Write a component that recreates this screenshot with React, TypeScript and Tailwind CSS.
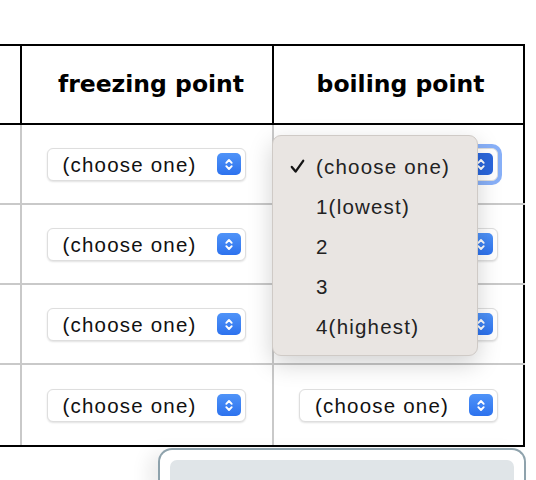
import React from "react";

const rows = [0, 1, 2, 3];
const options = ["(choose one)", "1(lowest)", "2", "3", "4(highest)"];

function Arrows({ pressed }: { pressed?: boolean }) {
    return (
        <div
            className={`flex h-[22px] w-[24px] items-center justify-center rounded-[5px] ${
                pressed ? "bg-[#2a66dc]" : "bg-gradient-to-b from-[#4f93f8] to-[#2d72ee]"
            }`}
        >
            <svg width="24" height="22" viewBox="0 0 24 22" fill="none">
                <path d="M9.3 9.8 L12 7 L14.7 9.8" stroke="#fff" strokeWidth="1.9" strokeLinecap="round" strokeLinejoin="round" />
                <path d="M9.3 13.2 L12 16 L14.7 13.2" stroke="#fff" strokeWidth="1.9" strokeLinecap="round" strokeLinejoin="round" />
            </svg>
        </div>
    );
}

function Select({ focused }: { focused?: boolean }) {
    return (
        <div
            className={`flex h-[33px] w-[199px] items-center justify-between rounded-[6px] border border-[#dedede] bg-white pl-[15px] pr-[4px] ${
                focused
                    ? "shadow-[0_0_0_4px_rgba(96,150,245,0.75)]"
                    : "shadow-[0_1px_2px_rgba(0,0,0,0.12)]"
            }`}
        >
            <span className="pt-[3px] text-[20.5px] leading-none tracking-[1.2px] text-[#111]">(choose one)</span>
            <Arrows pressed={focused} />
        </div>
    );
}

export default function App() {
    return (
        <div className="relative h-[480px] w-[536px] overflow-hidden bg-white font-['Liberation_Sans',Arial,sans-serif]">
            <div className="mt-[44px] w-[525px] border-y-2 border-black">
                {/* header */}
                <div className="flex h-[79px] border-b-2 border-black">
                    <div className="w-[22px] border-r-2 border-black" />
                    <div className="flex w-[252px] items-center justify-center border-r-2 border-black pl-[8px] font-['DejaVu_Sans',sans-serif] text-[23.5px] font-bold text-black">
                        freezing point
                    </div>
                    <div className="flex flex-1 items-center justify-center border-r-2 border-black pl-[4px] font-['DejaVu_Sans',sans-serif] text-[23.5px] font-bold text-black">
                        boiling point
                    </div>
                </div>

                {/* body */}
                {rows.map((r) => (
                    <div
                        key={r}
                        className={`flex ${r < 3 ? "h-[80px] border-b-2 border-[#c9c9c9]" : "h-[80px]"}`}
                    >
                        <div className="w-[22px] border-r-2 border-[#c9c9c9]" />
                        <div className="flex w-[252px] items-center justify-center border-r-2 border-[#c9c9c9] pr-[2px]">
                            <Select />
                        </div>
                        <div className="flex flex-1 items-center justify-center border-r-2 border-black">
                            <Select focused={r === 0} />
                        </div>
                    </div>
                ))}
            </div>

            {/* partially visible card below */}
            <div className="ml-[158px] mt-[1px] h-[40px] w-[368px] rounded-t-[14px] border-2 border-b-0 border-[#8ea2ac] px-[10px] pt-[10px] shadow-[-10px_4px_18px_rgba(0,0,0,0.08)]">
                <div className="h-full rounded-t-[7px] bg-[#e0e5e8]" />
            </div>

            {/* open dropdown menu */}
            <div className="absolute left-[272px] top-[135px] h-[221px] w-[206px] rounded-[9px] border border-[#cfcac6] bg-[#e9e5e2] pt-[11px] shadow-[0_8px_24px_rgba(0,0,0,0.18)]">
                {options.map((o, i) => (
                    <div key={o} className="relative flex h-[40px] items-center pl-[43px] text-[20.5px] leading-none tracking-[1.2px] text-[#222]">
                        {i === 0 && (
                            <svg className="absolute left-[17px] top-[12px]" width="15" height="15" viewBox="0 0 15 15" fill="none">
                                <path d="M1.8 8 L5.6 12.6 L13.2 1.8" stroke="#151515" strokeWidth="2.3" strokeLinecap="round" strokeLinejoin="round" />
                            </svg>
                        )}
                        {o}
                    </div>
                ))}
            </div>
        </div>
    );
}
